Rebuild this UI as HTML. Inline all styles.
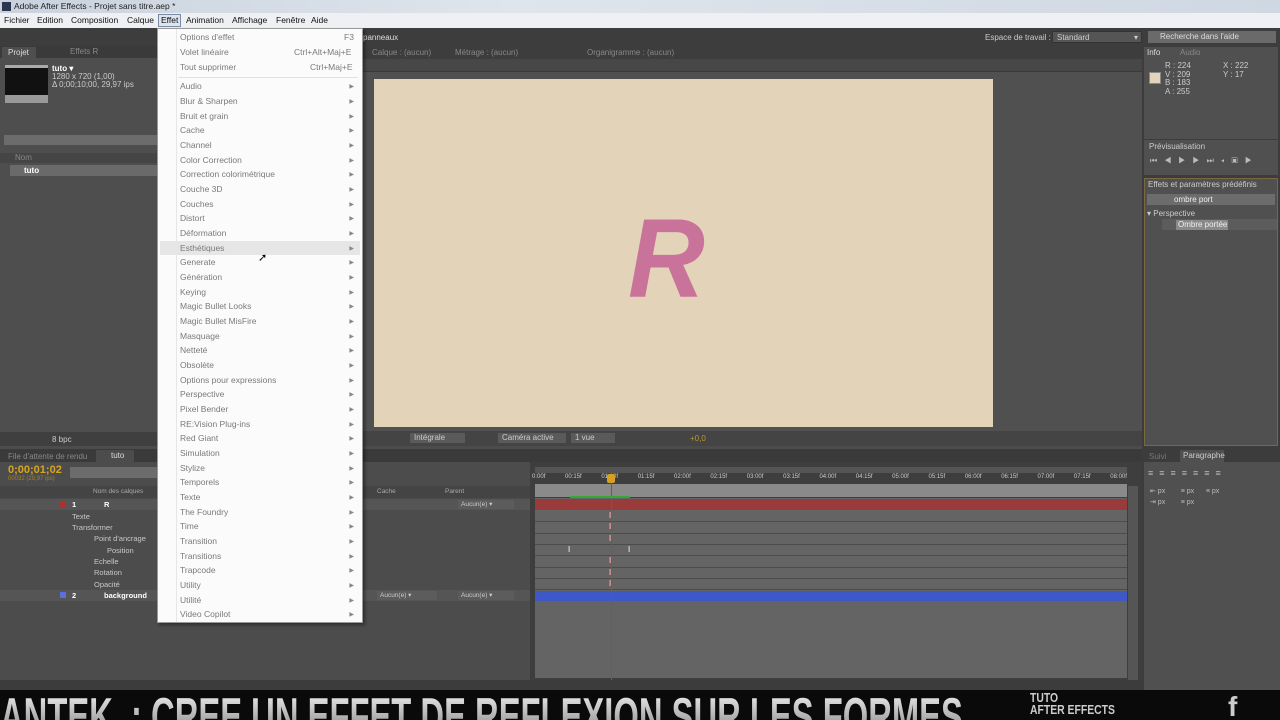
<!DOCTYPE html>
<html><head><meta charset="utf-8"><style>
*{margin:0;padding:0;box-sizing:border-box}
body{width:1280px;height:720px;overflow:hidden;background:#4f4f4f;font-family:"Liberation Sans",sans-serif;font-size:8px;color:#ccc;position:relative}
.a{position:absolute}
.menu span{position:absolute;left:22px;color:#7a7a7a;font-size:8.5px}
.menu i{position:absolute;right:8px;font-style:normal;color:#888;font-size:6px}
.tl{color:#c8c8c8;font-size:7.5px}
.row{position:absolute;left:535px;width:592px;height:1px;background:#4c4c4c}
.k{position:absolute;left:609px;color:#f0a0a0;font-size:8px;font-weight:bold}
</style></head><body>
<div class="a" style="left:0;top:0;width:1280px;height:13px;background:linear-gradient(90deg,#c9d2de,#dfe5ec 40%,#cfd7e2);color:#222;font-size:8.5px;padding-left:14px;line-height:13px">Adobe After Effects - Projet sans titre.aep *</div>
<div class="a" style="left:2px;top:2px;width:9px;height:9px;background:#2a3550"></div>
<div class="a" style="left:0;top:13px;width:1280px;height:15px;background:#eef0f3;color:#111;font-size:8.5px;line-height:15px">
<span class="a" style="left:4px">Fichier</span><span class="a" style="left:37px">Edition</span><span class="a" style="left:71px">Composition</span><span class="a" style="left:127px">Calque</span><span class="a" style="left:158px;width:23px;height:13px;top:1px;border:1px solid #7a8aa0;background:#dbe4ef;line-height:11px;padding-left:2px">Effet</span><span class="a" style="left:186px">Animation</span><span class="a" style="left:232px">Affichage</span><span class="a" style="left:276px">Fenêtre</span><span class="a" style="left:311px">Aide</span></div>
<div class="a" style="left:0;top:28px;width:1280px;height:18px;background:#3d3d3d"></div>
<div class="a" style="left:363px;top:33px;color:#ddd">panneaux</div>
<div class="a" style="left:985px;top:33px;color:#ccc">Espace de travail :</div>
<div class="a" style="left:1052px;top:31px;width:90px;height:12px;background:#555;border:1px solid #333;color:#ccc;padding-left:4px;line-height:11px">Standard<span style="float:right;margin-right:3px">▾</span></div>
<div class="a" style="left:1148px;top:31px;width:128px;height:12px;background:#6a6a6a;color:#ddd;padding-left:12px;line-height:12px">Recherche dans l'aide</div>
<div class="a" style="left:0;top:46px;width:157px;height:392px;background:#4e4e4e"></div>
<div class="a" style="left:0;top:46px;width:157px;height:12px;background:#3a3a3a"></div>
<div class="a" style="left:2px;top:47px;width:34px;height:11px;background:#4e4e4e;color:#ddd;padding-left:6px;line-height:11px">Projet</div>
<div class="a" style="left:70px;top:47px;color:#888">Effets R</div>
<div class="a" style="left:5px;top:65px;width:43px;height:38px;background:#111;border-top:3px solid #aaa;border-bottom:8px solid #999"></div>
<div class="a" style="left:52px;top:64px;color:#fff;font-weight:bold">tuto ▾</div>
<div class="a" style="left:52px;top:73px;color:#ccc;line-height:8px">1280 x 720 (1,00)<br>Δ 0;00;10;00, 29,97 ips</div>
<div class="a" style="left:4px;top:135px;width:153px;height:10px;background:#6c6c6c"></div>
<div class="a" style="left:0;top:153px;width:157px;height:10px;background:#454545;color:#888;padding-left:15px;line-height:10px">Nom</div>
<div class="a" style="left:10px;top:165px;width:147px;height:11px;background:#6a6a6a;color:#fff;font-weight:bold;padding-left:14px;line-height:11px">tuto</div>
<div class="a" style="left:0;top:432px;width:157px;height:14px;background:#3f3f3f"></div>
<div class="a" style="left:52px;top:435px;color:#ccc">8 bpc</div>
<div class="a" style="left:362px;top:46px;width:780px;height:400px;background:#505050"></div>
<div class="a" style="left:362px;top:46px;width:780px;height:13px;background:#3d3d3d"></div>
<div class="a" style="left:372px;top:47px;color:#888;line-height:11px">Calque : (aucun)</div>
<div class="a" style="left:455px;top:47px;color:#888;line-height:11px">Métrage : (aucun)</div>
<div class="a" style="left:587px;top:47px;color:#888;line-height:11px">Organigramme : (aucun)</div>
<div class="a" style="left:362px;top:59px;width:780px;height:13px;background:#474747;border-bottom:1px solid #3a3a3a"></div>
<div class="a" style="left:374px;top:79px;width:619px;height:348px;background:#e3d4b9"></div>
<div class="a" style="left:626px;top:203px;font:italic bold 112px 'Liberation Sans',sans-serif;color:#c9739b;line-height:112px;transform:scaleX(0.95)">R</div>
<div class="a" style="left:362px;top:431px;width:780px;height:15px;background:#444"></div>
<div class="a" style="left:410px;top:433px;width:55px;height:10px;background:#5a5a5a;color:#ccc;padding-left:4px;line-height:10px">Intégrale</div>
<div class="a" style="left:498px;top:433px;width:68px;height:10px;background:#5a5a5a;color:#ccc;padding-left:4px;line-height:10px">Caméra active</div>
<div class="a" style="left:571px;top:433px;width:44px;height:10px;background:#5a5a5a;color:#ccc;padding-left:4px;line-height:10px">1 vue</div>
<div class="a" style="left:690px;top:434px;color:#b89830">+0,0</div>
<div class="a" style="left:1142px;top:46px;width:138px;height:400px;background:#3c3c3c"></div>
<div class="a" style="left:1144px;top:47px;width:134px;height:92px;background:#505050"></div>
<div class="a" style="left:1147px;top:48px;color:#ddd">Info</div><div class="a" style="left:1180px;top:48px;color:#888">Audio</div>
<div class="a" style="left:1149px;top:72px;width:12px;height:12px;background:#e3d4b9;border:1px solid #888"></div>
<div class="a" style="left:1165px;top:62px;line-height:8.7px;color:#ccc">R : 224<br>V : 209<br>B : 183<br>A : 255</div>
<div class="a" style="left:1223px;top:62px;line-height:8.7px;color:#ccc">X : 222<br>Y : 17</div>
<div class="a" style="left:1144px;top:140px;width:134px;height:35px;background:#505050"></div>
<div class="a" style="left:1149px;top:142px;color:#ccc">Prévisualisation</div>
<div class="a" style="left:1150px;top:156px;color:#bbb;font-size:8px;letter-spacing:7px">⏮◀▶▶⏭◂▣▶</div>
<div class="a" style="left:1144px;top:178px;width:134px;height:268px;background:#505050;border:1px solid #7a6840"></div>
<div class="a" style="left:1148px;top:180px;color:#ccc">Effets et paramètres prédéfinis</div>
<div class="a" style="left:1147px;top:194px;width:128px;height:11px;background:#6c6c6c;color:#eee;padding-left:27px;line-height:11px">ombre port</div>
<div class="a" style="left:1147px;top:209px;color:#ccc">▾ Perspective</div>
<div class="a" style="left:1162px;top:219px;width:115px;height:11px;background:#5c5c5c"></div>
<div class="a" style="left:1176px;top:220px;width:52px;height:10px;background:#8a8a8a;color:#eee;padding-left:2px;line-height:10px">Ombre portée</div>
<div class="a" style="left:0;top:446px;width:1142px;height:244px;background:#4c4c4c"></div>
<div class="a" style="left:0;top:449px;width:1142px;height:13px;background:#3a3a3a"></div>
<div class="a" style="left:8px;top:452px;color:#888">File d'attente de rendu</div>
<div class="a" style="left:96px;top:450px;width:38px;height:12px;background:#4c4c4c;color:#ddd;padding-left:15px;line-height:12px">tuto</div>
<div class="a" style="left:8px;top:464px;color:#d8a520;font-size:11px;font-weight:bold">0;00;01;02</div>
<div class="a" style="left:8px;top:476px;color:#a08030;font-size:6px">00032 (29,97 ips)</div>
<div class="a" style="left:70px;top:467px;width:90px;height:11px;background:#6c6c6c"></div>
<div class="a" style="left:0;top:486px;width:530px;height:12px;background:#444;color:#aaa;font-size:6.5px;line-height:12px"><span class="a" style="left:93px">Nom des calques</span><span class="a" style="left:377px">Cache</span><span class="a" style="left:445px">Parent</span></div>
<div class="a" style="left:0;top:499px;width:530px;height:11px;background:#555"></div>
<div class="a tl" style="left:72px;top:500px;color:#fff;font-weight:bold">1</div>
<div class="a" style="left:60px;top:501px;width:6px;height:6px;background:#b03030"></div>
<div class="a tl" style="left:104px;top:500px;color:#fff;font-weight:bold">R</div>
<div class="a tl" style="left:72px;top:512px">Texte</div>
<div class="a tl" style="left:72px;top:523px">Transformer</div>
<div class="a tl" style="left:94px;top:534px">Point d'ancrage</div>
<div class="a tl" style="left:107px;top:546px">Position</div>
<div class="a tl" style="left:94px;top:557px">Echelle</div>
<div class="a tl" style="left:94px;top:568px">Rotation</div>
<div class="a tl" style="left:94px;top:580px">Opacité</div>
<div class="a" style="left:0;top:590px;width:530px;height:11px;background:#555"></div>
<div class="a" style="left:60px;top:592px;width:6px;height:6px;background:#5a70e0"></div>
<div class="a tl" style="left:72px;top:591px;color:#fff;font-weight:bold">2</div>
<div class="a tl" style="left:104px;top:591px;color:#fff;font-weight:bold">background</div>
<div class="a" style="left:458px;top:500px;width:56px;height:9px;background:#5c5c5c;color:#ccc;font-size:6.5px;padding-left:3px">Aucun(e) ▾</div>
<div class="a" style="left:377px;top:591px;width:60px;height:9px;background:#5c5c5c;color:#ccc;font-size:6.5px;padding-left:3px">Aucun(e) ▾</div>
<div class="a" style="left:458px;top:591px;width:56px;height:9px;background:#5c5c5c;color:#ccc;font-size:6.5px;padding-left:3px">Aucun(e) ▾</div>
<div class="a" style="left:530px;top:462px;width:612px;height:228px;background:#3e3e3e"></div>
<div class="a" style="left:535px;top:484px;width:592px;height:13px;background:#8a8a8a"></div>
<div class="a" style="left:535px;top:498px;width:592px;height:180px;background:#646464"></div>
<div class="a" style="left:535px;top:499px;width:592px;height:11px;background:#9a3b3b"></div>
<div class="row" style="top:521px"></div><div class="row" style="top:533px"></div><div class="row" style="top:544px"></div><div class="row" style="top:555px"></div><div class="row" style="top:567px"></div><div class="row" style="top:578px"></div><div class="row" style="top:589px"></div>
<div class="a" style="left:535px;top:591px;width:592px;height:10px;background:#3f58c8"></div>
<div class="k" style="top:511px">I</div><div class="k" style="top:522px">I</div><div class="k" style="top:534px">I</div><div class="k" style="top:556px">I</div><div class="k" style="top:568px">I</div><div class="k" style="top:579px">I</div>
<div class="k" style="top:545px;left:568px;color:#ccc">I</div><div class="k" style="top:545px;left:628px;color:#ccc">I</div>
<div class="a" style="left:535px;top:467px;width:592px;height:6px;background:#555"></div>
<div class="a" style="left:532px;top:474px;width:600px;color:#ccc;font-size:6px;word-spacing:18px;white-space:nowrap">0:00f 00:15f 01:00f 01:15f 02:00f 02:15f 03:00f 03:15f 04:00f 04:15f 05:00f 05:15f 06:00f 06:15f 07:00f 07:15f 08:00f</div>
<div class="a" style="left:611px;top:472px;width:1px;height:208px;background:#d03030"></div>
<div class="a" style="left:607px;top:474px;width:8px;height:9px;background:#d8a020;border-radius:2px"></div>
<div class="a" style="left:570px;top:496px;width:60px;height:2px;background:#3a3"></div>
<div class="a" style="left:1128px;top:486px;width:10px;height:194px;background:#555"></div>
<div class="a" style="left:535px;top:682px;width:592px;height:8px;background:#555"></div>
<div class="a" style="left:1142px;top:446px;width:138px;height:244px;background:#3c3c3c"></div>
<div class="a" style="left:1144px;top:462px;width:136px;height:228px;background:#505050"></div>
<div class="a" style="left:1149px;top:452px;color:#777">Suivi</div>
<div class="a" style="left:1180px;top:450px;width:44px;height:12px;background:#505050;color:#ccc;padding-left:3px;line-height:12px">Paragraphe</div>
<div class="a" style="left:1148px;top:468px;color:#bbb;font-size:9px;letter-spacing:6px">≡≡≡≡≡≡≡</div>
<div class="a" style="left:1150px;top:487px;color:#bbb;font-size:7px">⇤ px &nbsp;&nbsp;&nbsp;&nbsp;&nbsp;&nbsp; ≡ px &nbsp;&nbsp;&nbsp;&nbsp; ≡ px</div>
<div class="a" style="left:1150px;top:498px;color:#bbb;font-size:7px">⇥ px &nbsp;&nbsp;&nbsp;&nbsp;&nbsp;&nbsp; ≡ px</div>
<div class="a menu" style="left:157px;top:28px;width:206px;height:595px;background:#fbfbfb;border:1px solid #9a9a9a;box-shadow:2px 2px 3px rgba(0,0,0,.4)">
<div class="a" style="left:18px;top:0;width:1px;height:593px;background:#e6e6e6"></div>
<div class="a" style="left:20px;top:48px;width:180px;height:1px;background:#e2e2e2"></div>
<div class="a" style="left:2px;top:212px;width:200px;height:14px;background:#e6e6e6"></div>
<span style="top:3px">Options d'effet</span><span style="top:3px;left:186px">F3</span>
<span style="top:18px">Volet linéaire</span><span style="top:18px;left:136px">Ctrl+Alt+Maj+E</span>
<span style="top:33px">Tout supprimer</span><span style="top:33px;left:152px">Ctrl+Maj+E</span>
<span style="top:52px">Audio</span><i style="top:54px">▶</i>
<span style="top:67px">Blur &amp; Sharpen</span><i style="top:69px">▶</i>
<span style="top:82px">Bruit et grain</span><i style="top:84px">▶</i>
<span style="top:96px">Cache</span><i style="top:98px">▶</i>
<span style="top:111px">Channel</span><i style="top:113px">▶</i>
<span style="top:126px">Color Correction</span><i style="top:128px">▶</i>
<span style="top:140px">Correction colorimétrique</span><i style="top:142px">▶</i>
<span style="top:155px">Couche 3D</span><i style="top:157px">▶</i>
<span style="top:170px">Couches</span><i style="top:172px">▶</i>
<span style="top:184px">Distort</span><i style="top:186px">▶</i>
<span style="top:199px">Déformation</span><i style="top:201px">▶</i>
<span style="top:214px">Esthétiques</span><i style="top:216px">▶</i>
<span style="top:228px">Generate</span><i style="top:230px">▶</i>
<span style="top:243px">Génération</span><i style="top:245px">▶</i>
<span style="top:258px">Keying</span><i style="top:260px">▶</i>
<span style="top:272px">Magic Bullet Looks</span><i style="top:274px">▶</i>
<span style="top:287px">Magic Bullet MisFire</span><i style="top:289px">▶</i>
<span style="top:302px">Masquage</span><i style="top:304px">▶</i>
<span style="top:316px">Netteté</span><i style="top:318px">▶</i>
<span style="top:331px">Obsolète</span><i style="top:333px">▶</i>
<span style="top:346px">Options pour expressions</span><i style="top:348px">▶</i>
<span style="top:360px">Perspective</span><i style="top:362px">▶</i>
<span style="top:375px">Pixel Bender</span><i style="top:377px">▶</i>
<span style="top:390px">RE:Vision Plug-ins</span><i style="top:392px">▶</i>
<span style="top:404px">Red Giant</span><i style="top:406px">▶</i>
<span style="top:419px">Simulation</span><i style="top:421px">▶</i>
<span style="top:434px">Stylize</span><i style="top:436px">▶</i>
<span style="top:448px">Temporels</span><i style="top:450px">▶</i>
<span style="top:463px">Texte</span><i style="top:465px">▶</i>
<span style="top:478px">The Foundry</span><i style="top:480px">▶</i>
<span style="top:492px">Time</span><i style="top:494px">▶</i>
<span style="top:507px">Transition</span><i style="top:509px">▶</i>
<span style="top:522px">Transitions</span><i style="top:524px">▶</i>
<span style="top:536px">Trapcode</span><i style="top:538px">▶</i>
<span style="top:551px">Utility</span><i style="top:553px">▶</i>
<span style="top:566px">Utilité</span><i style="top:568px">▶</i>
<span style="top:580px">Video Copilot</span><i style="top:582px">▶</i>
</div>
<div class="a" style="left:258px;top:251px;color:#000;font-size:11px">➚</div>
<div class="a" style="left:0;top:680px;width:1142px;height:10px;background:#3c3c3c"></div>
<div class="a" style="left:0;top:690px;width:1280px;height:30px;background:#0a0a0a;overflow:hidden">
<div class="a" style="left:0;top:1px;font:bold 52px 'Liberation Sans',sans-serif;line-height:52px;white-space:nowrap;transform:scaleX(0.63);transform-origin:left top;background:linear-gradient(#f0f0f0,#b0b0b0 50%,#707070);-webkit-background-clip:text;color:transparent">ANTEK &nbsp;: CREE UN EFFET DE REFLEXION SUR LES FORMES</div>
<div class="a" style="left:1030px;top:2px;color:#ccc;font:bold 13px 'Liberation Sans',sans-serif;line-height:12px;transform:scaleX(0.8);transform-origin:left top">TUTO<br>AFTER EFFECTS</div>
<div class="a" style="left:1228px;top:1px;color:#ccc;font:bold 28px 'Liberation Sans',sans-serif">f</div>
</div>
</body></html>
